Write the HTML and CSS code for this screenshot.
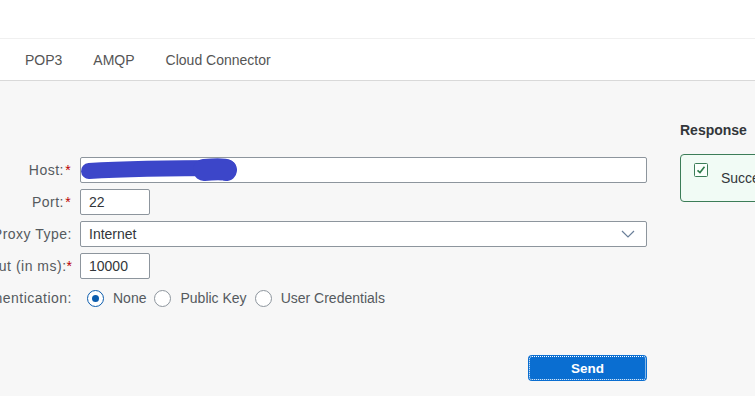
FILE: index.html
```html
<!DOCTYPE html>
<html lang="en">
<head>
    <meta charset="UTF-8">
    <meta name="viewport" content="width=device-width, initial-scale=1.0">
    <title>Check Connection</title>
    <link rel="stylesheet" href="styles.css">
</head>
<body>
    <div class="shell-bar"></div>

    <nav class="tabs">
        <span class="tab">POP3</span>
        <span class="tab">AMQP</span>
        <span class="tab">Cloud Connector</span>
    </nav>

    <div class="page">
        <form class="form" onsubmit="return false">
            <div class="row">
                <label class="label">Host:<span class="req">*</span></label>
                <div class="field-wrap wide">
                    <input class="field" type="text" value="">
                    <!-- redaction scribble over the host name -->
                    <svg class="scribble" width="160" height="26" viewBox="0 0 160 26">
                        <path d="M9 14 C40 12 90 11 148 11" stroke="#3c46c9" stroke-width="16" stroke-linecap="round" fill="none"/>
                        <path d="M124 13 C134 12 144 12 146 13" stroke="#3c46c9" stroke-width="22" stroke-linecap="round" fill="none"/>
                    </svg>
                </div>
            </div>
            <div class="row">
                <label class="label">Port:<span class="req">*</span></label>
                <input class="field short" type="text" value="22">
            </div>
            <div class="row">
                <label class="label">Proxy Type:<span class="req"></span></label>
                <div class="select wide">
                    <span>Internet</span>
                    <svg width="14" height="8" viewBox="0 0 14 8">
                        <path d="M1 1 L7 7 L13 1" stroke="#6a7f99" stroke-width="1.2" fill="none"/>
                    </svg>
                </div>
            </div>
            <div class="row">
                <label class="label">Timeout (in ms):<span class="req">*</span></label>
                <input class="field short" type="text" value="10000">
            </div>
            <div class="row">
                <label class="label">Authentication:<span class="req"></span></label>
                <div class="radios">
                    <span class="radio"><span class="circle on"></span>None</span>
                    <span class="radio"><span class="circle"></span>Public Key</span>
                    <span class="radio"><span class="circle"></span>User Credentials</span>
                </div>
            </div>
            <div class="actions">
                <button class="send" type="button">Send</button>
            </div>
        </form>

        <aside class="response">
            <h3>Response</h3>
            <div class="status">
                <svg class="status-icon" width="14" height="14" viewBox="0 0 14 14">
                    <rect x="0.5" y="0.5" width="13" height="13" rx="1" fill="#fbfffc" stroke="#3c7d58"/>
                    <path d="M3.5 7.3 L6 9.6 L10.5 3.8" stroke="#2f7a4a" stroke-width="1.6" fill="none"/>
                </svg>
                <span class="status-text">Success</span>
            </div>
        </aside>
    </div>
</body>
</html>
```

FILE: styles.css
```css
body {
    margin: 0;
    width: 755px;
    height: 396px;
    overflow: hidden;
    background: #f7f7f7;
    font-family: "Liberation Sans", Arial, sans-serif;
    color: #32363a;
}
.shell-bar {
    height: 38px;
    background: #fff;
    border-bottom: 1px solid #f0f0f0;
}
.tabs {
    height: 41px;
    background: #fff;
    border-bottom: 1px solid #d9d9d9;
    display: flex;
    align-items: center;
    gap: 31px;
    padding-left: 25px;
    font-size: 14px;
    color: #555;
}
.page {
    display: flex;
    gap: 33px;
}
.form {
    width: 647px;
    flex: none;
    padding-top: 76px;
    display: flex;
    flex-direction: column;
    gap: 6px;
}
.row {
    display: flex;
    align-items: center;
    height: 26px;
}
.label {
    width: 72px;
    flex: none;
    margin-right: 8px;
    display: flex;
    justify-content: flex-end;
    white-space: nowrap;
    font-size: 14px;
    letter-spacing: 0.5px;
    color: #555a5e;
}
.req {
    width: 8px;
    text-align: center;
    letter-spacing: 0;
    color: #bb0000;
}
.field {
    box-sizing: border-box;
    height: 26px;
    margin: 0;
    padding: 0 8px;
    border: 1px solid #8d959d;
    border-radius: 2px;
    background: #fff;
    font-family: inherit;
    font-size: 14px;
    color: #32363a;
    outline: none;
}
.short {
    width: 70px;
}
.wide {
    flex: 1;
}
.field-wrap {
    position: relative;
    display: flex;
}
.field-wrap .field {
    width: 100%;
}
.scribble {
    position: absolute;
    top: 0;
    left: 0;
}
.select {
    box-sizing: border-box;
    height: 26px;
    padding: 0 11px 0 8px;
    border: 1px solid #8d959d;
    border-radius: 2px;
    background: #fff;
    display: flex;
    align-items: center;
    justify-content: space-between;
    font-size: 14px;
}
.radios {
    display: flex;
    align-items: center;
    margin-left: 7px;
    font-size: 14px;
    color: #555a5e;
}
.radio {
    display: flex;
    align-items: center;
    gap: 9px;
    margin-right: 8px;
}
.circle {
    box-sizing: border-box;
    width: 17px;
    height: 17px;
    border: 1px solid #8d959d;
    border-radius: 50%;
    background: #fff;
    display: flex;
    align-items: center;
    justify-content: center;
}
.circle.on {
    border-color: #0b5cad;
}
.circle.on::after {
    content: "";
    width: 7px;
    height: 7px;
    border-radius: 50%;
    background: #0b5cad;
}
.actions {
    display: flex;
    justify-content: flex-end;
    margin-top: 38px;
}
.send {
    position: relative;
    width: 119px;
    height: 26px;
    border: none;
    border-radius: 4px;
    background: #0a6ed1;
    color: #fff;
    font-family: inherit;
    font-size: 13.5px;
    font-weight: bold;
    cursor: pointer;
}
.send::after {
    content: "";
    position: absolute;
    inset: 1px;
    border: 1px dotted #fff;
    border-radius: 3px;
}
.response {
    width: 220px;
    flex: none;
    padding-top: 40px;
}
.response h3 {
    margin: 0 0 15px;
    font-size: 14px;
    line-height: 18px;
    color: #32363a;
}
.status {
    box-sizing: border-box;
    height: 48px;
    padding: 8px 0 0 13px;
    border: 1px solid #3c7d58;
    border-radius: 4px;
    background: #f1fbf5;
    display: flex;
    align-items: flex-start;
    gap: 13px;
}
.status-icon {
    flex: none;
}
.status-text {
    padding-top: 6px;
    line-height: 18px;
    font-size: 14px;
    color: #32363a;
}
```
